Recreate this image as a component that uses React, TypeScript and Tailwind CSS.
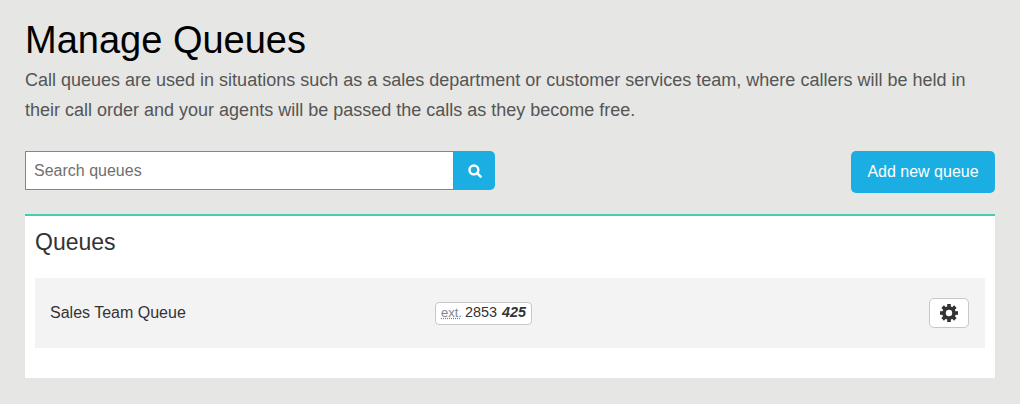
function SearchIcon() {
  return (
    <svg width="14" height="14" viewBox="0 0 14 14" fill="none" stroke="currentColor">
      <circle cx="5.9" cy="5.9" r="4.4" strokeWidth="2.5" />
      <path d="M9.2 9.2 12.6 12.6" strokeWidth="2.6" strokeLinecap="round" />
    </svg>
  );
}

function CogIcon() {
  const teeth = [0, 45, 90, 135, 180, 225, 270, 315];
  return (
    <svg width="20" height="20" viewBox="0 0 20 20" fill="none" stroke="currentColor">
      {teeth.map((deg) => (
        <path key={deg} d="M10 5V1" strokeWidth="3.6" transform={`rotate(${deg} 10 10)`} />
      ))}
      <circle cx="10" cy="10" r="5" strokeWidth="3.6" />
    </svg>
  );
}

export default function App() {
  return (
    <div className="h-[404px] overflow-hidden bg-[#e6e6e4] px-[25px] pt-[16px] font-['Liberation_Sans',Arial,sans-serif]">
      {/* Heading */}
      <h1 className="text-[38px] leading-[48px] text-black">Manage Queues</h1>
      <p className="mt-[1px] text-[18px] leading-[30px] text-[#555555]">
        Call queues are used in situations such as a sales department or customer services team, where callers will be held in
        <br />
        their call order and your agents will be passed the calls as they become free.
      </p>

      {/* Toolbar */}
      <div className="mt-[26px] flex items-start justify-between">
        <div className="flex h-[39px] w-[470px]">
          <input
            placeholder="Search queues"
            className="h-full min-w-0 flex-1 border border-[#2aa5d5] bg-white px-[8px] text-[16px] text-[#555555] placeholder:text-[#6f6f6f]"
          />
          <button className="flex w-[41px] items-center justify-center rounded-r-[5px] bg-[#1aaee2] text-white">
            <SearchIcon />
          </button>
        </div>
        <button className="h-[42px] w-[144px] rounded-[5px] bg-[#1aaee2] text-[16px] text-white">Add new queue</button>
      </div>

      {/* Queues panel */}
      <section className="mt-[21px] h-[164px] border-t-2 border-[#48cbb0] bg-white px-[10px]">
        <h2 className="pt-[11px] text-[23px] leading-[30px] text-[#333333]">Queues</h2>
        <div className="mt-[21px] flex h-[70px] items-center bg-[#f3f3f3] pl-[15px] pr-[16px]">
          <span className="w-[385px] text-[16px] text-[#333333]">Sales Team Queue</span>
          <span className="flex h-[23px] w-[97px] items-center rounded-[4px] border border-[#c8c8c8] bg-white pl-[5px] text-[14.4px] text-[#333333]">
            <abbr className="w-[24px] text-[13px] text-[#7f8590] underline decoration-dotted">ext.</abbr>
            <span>2853</span>
            <b className="ml-[5px] italic">425</b>
          </span>
          <button className="ml-auto flex h-[30px] w-[40px] items-center justify-center rounded-[5px] border border-[#c8c8c8] bg-white text-[#333333]">
            <CogIcon />
          </button>
        </div>
      </section>
    </div>
  );
}
